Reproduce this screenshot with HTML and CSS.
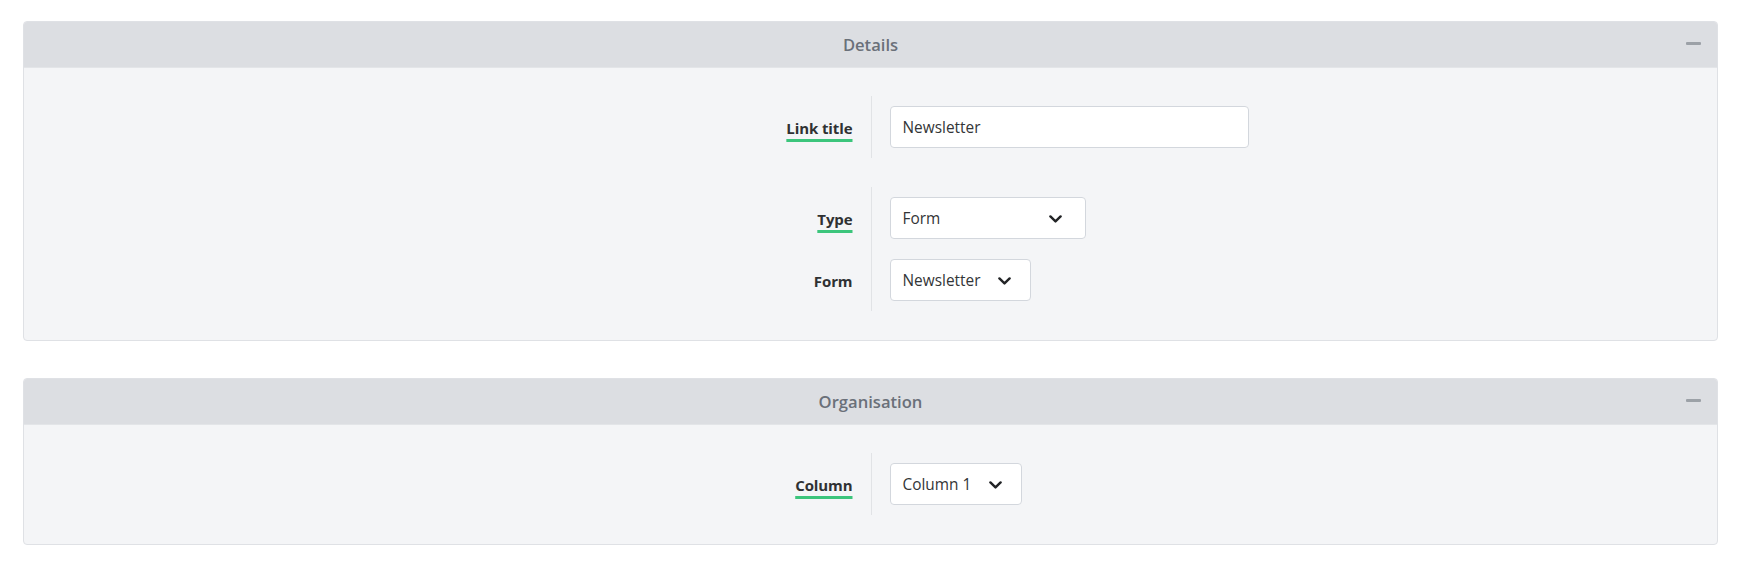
FILE: index.html
```html
<!DOCTYPE html>
<html lang="en">
<head>
<meta charset="utf-8">
<title>Link settings</title>
<link rel="stylesheet" href="styles.css">
</head>
<body>
<div class="page">
  <section class="panel">
    <header class="panel-head">
      <h2 class="panel-title">Details</h2>
      <span class="collapse" aria-label="Collapse"></span>
    </header>
    <div class="panel-body">
      <div class="group">
        <div class="labels">
          <div class="label-cell"><span class="label req">Link title</span></div>
        </div>
        <div class="fields">
          <div class="input text-input">Newsletter</div>
        </div>
      </div>
      <div class="group">
        <div class="labels">
          <div class="label-cell"><span class="label req">Type</span></div>
          <div class="label-cell"><span class="label">Form</span></div>
        </div>
        <div class="fields">
          <div class="input select select-type"><span class="select-value">Form</span><svg class="chev" viewBox="0 0 13 8" width="13" height="8"><polyline points="1.4,1.4 6.5,6.4 11.6,1.4"/></svg></div>
          <div class="input select"><span class="select-value">Newsletter</span><svg class="chev" viewBox="0 0 13 8" width="13" height="8"><polyline points="1.4,1.4 6.5,6.4 11.6,1.4"/></svg></div>
        </div>
      </div>
    </div>
  </section>

  <section class="panel">
    <header class="panel-head">
      <h2 class="panel-title">Organisation</h2>
      <span class="collapse" aria-label="Collapse"></span>
    </header>
    <div class="panel-body">
      <div class="group">
        <div class="labels">
          <div class="label-cell"><span class="label req">Column</span></div>
        </div>
        <div class="fields">
          <div class="input select"><span class="select-value">Column 1</span><svg class="chev" viewBox="0 0 13 8" width="13" height="8"><polyline points="1.4,1.4 6.5,6.4 11.6,1.4"/></svg></div>
        </div>
      </div>
    </div>
  </section>
</div>
</body>
</html>
```

FILE: styles.css
```css
* { box-sizing: border-box; }

html, body {
  margin: 0;
  padding: 0;
  background: #ffffff;
}

body {
  font-family: "Open Sans", "Noto Sans", sans-serif;
  color: #2f3133;
}

.page {
  padding: 21px 22px 0 23px;
  display: flex;
  flex-direction: column;
  gap: 37px;
}

.panel {
  border: 1px solid #dfe1e5;
  border-radius: 4px;
  background: #f4f5f7;
  overflow: hidden;
}

.panel-head {
  height: 46px;
  background: #dcdee2;
  display: flex;
  align-items: center;
  justify-content: center;
  position: relative;
  border-bottom: 1px solid #e3e5e8;
}

.panel-title {
  margin: 0;
  font-size: 16.6px;
  font-weight: 600;
  color: #6a7079;
}

.collapse {
  position: absolute;
  right: 16px;
  top: 20px;
  width: 15px;
  height: 3px;
  background: #9ca1a7;
  border-radius: 1px;
}

.panel-body {
  padding: 28px 0 29px;
  display: flex;
  flex-direction: column;
  gap: 29px;
}

.group {
  display: grid;
  grid-template-columns: 1fr 1fr;
}

.labels {
  display: flex;
  flex-direction: column;
  gap: 20px;
  padding: 10px 18px 10px 0;
}

.label-cell {
  height: 42px;
  padding-top: 2px;
  display: flex;
  align-items: center;
  justify-content: flex-end;
}

.label {
  font-size: 15px;
  font-weight: 700;
  color: #2f3133;
  letter-spacing: -0.1px;
}

.label.req {
  text-decoration: underline;
  text-decoration-color: #3cc57c;
  text-decoration-thickness: 2.5px;
  text-underline-offset: 5px;
}

.fields {
  border-left: 1px solid #e1e3e6;
  padding: 10px 0 10px 18px;
  display: flex;
  flex-direction: column;
  align-items: flex-start;
  gap: 20px;
}

.input {
  height: 42px;
  background: #ffffff;
  border: 1px solid #d3d7dd;
  border-radius: 4px;
  font-size: 15.4px;
  color: #333537;
  display: flex;
  align-items: center;
  padding: 1px 12px 0;
}

.text-input {
  width: 359px;
}

.select {
  padding: 1px 19px 0 12px;
  gap: 18px;
}

.select-type {
  width: 196px;
  justify-content: space-between;
  padding-right: 23px;
}

.chev {
  display: block;
  flex: none;
  width: 13px;
  height: 8px;
}

.chev polyline {
  fill: none;
  stroke: #222426;
  stroke-width: 2.4;
  stroke-linecap: round;
  stroke-linejoin: round;
}
```
